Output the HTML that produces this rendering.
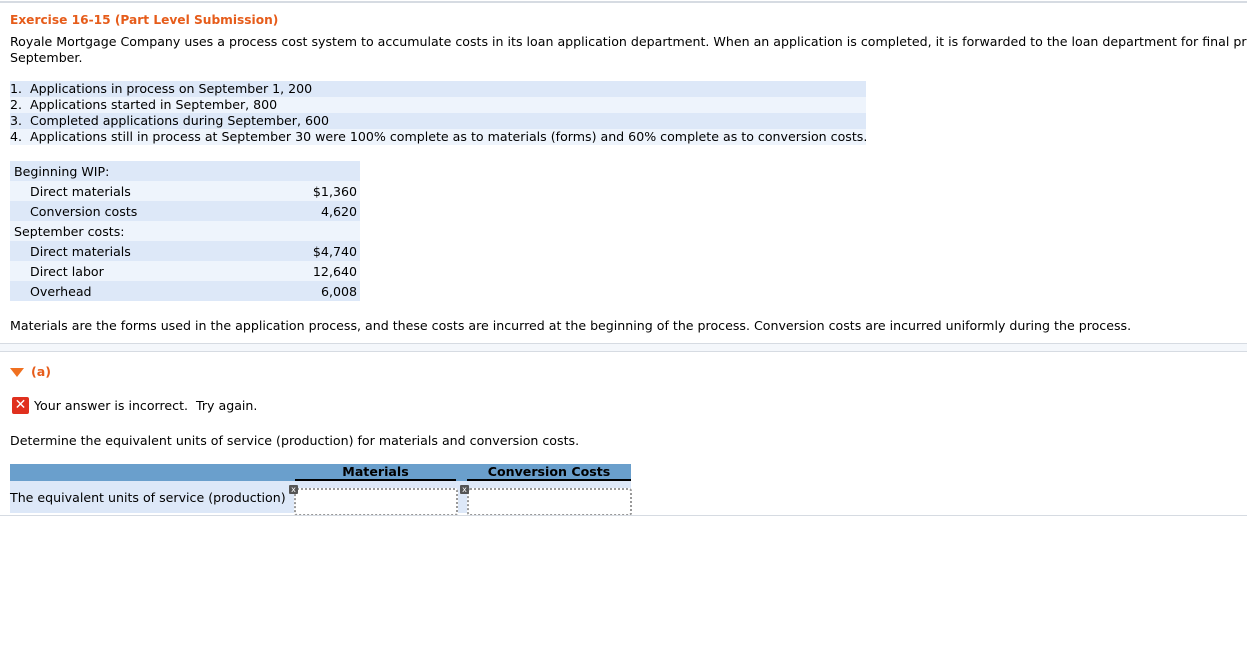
<!DOCTYPE html><html><head><style>
body{margin:0;width:1247px;height:648px;background:#fff;font-family:"DejaVu Sans","Liberation Sans",sans-serif;font-size:12.6px;color:#000;position:relative;overflow:hidden}
.a{position:absolute;white-space:nowrap}
.r{position:absolute;left:10px;line-height:16px;height:16px;white-space:nowrap}
.c{position:absolute;left:10px;width:350px;height:20px;line-height:21px;white-space:nowrap}
.d{background:#dde8f8}.l{background:#eef4fc}
.c span{position:absolute;right:3px}
</style></head><body>
<div class="a" style="left:0;top:1px;width:1247px;height:2px;background:#d6dbe2"></div>
<div class="a" style="left:10px;top:13px;color:#e65c1a;font-weight:bold;font-size:12.2px">Exercise 16-15 (Part Level Submission)</div>
<div class="a" style="left:10px;top:34px;line-height:16px;width:1237px;overflow:hidden">Royale Mortgage Company uses a process cost system to accumulate costs in its loan application department. When an application is completed, it is forwarded to the loan department for final processing.<br>September.</div>
<div class="r d" style="top:81px;width:856px">1.&nbsp; Applications in process on September 1, 200</div>
<div class="r l" style="top:97px;width:856px">2.&nbsp; Applications started in September, 800</div>
<div class="r d" style="top:113px;width:856px">3.&nbsp; Completed applications during September, 600</div>
<div class="r l" style="top:129px;width:856px">4.&nbsp; Applications still in process at September 30 were 100% complete as to materials (forms) and 60% complete as to conversion costs.</div>
<div class="c d" style="top:161px">&nbsp;Beginning WIP:</div>
<div class="c l" style="top:181px">&nbsp;&nbsp;&nbsp;&nbsp;&nbsp;Direct materials<span>$1,360</span></div>
<div class="c d" style="top:201px">&nbsp;&nbsp;&nbsp;&nbsp;&nbsp;Conversion costs<span>4,620</span></div>
<div class="c l" style="top:221px">&nbsp;September costs:</div>
<div class="c d" style="top:241px">&nbsp;&nbsp;&nbsp;&nbsp;&nbsp;Direct materials<span>$4,740</span></div>
<div class="c l" style="top:261px">&nbsp;&nbsp;&nbsp;&nbsp;&nbsp;Direct labor<span>12,640</span></div>
<div class="c d" style="top:281px">&nbsp;&nbsp;&nbsp;&nbsp;&nbsp;Overhead<span>6,008</span></div>
<div class="a" style="left:10px;top:318px">Materials are the forms used in the application process, and these costs are incurred at the beginning of the process. Conversion costs are incurred uniformly during the process.</div>
<div class="a" style="left:0;top:343px;width:1247px;height:7px;background:#f4f7fb;border-top:1px solid #d6dbe2;border-bottom:1px solid #d6dbe2"></div>
<svg class="a" style="left:10px;top:368px" width="14" height="9"><polygon points="0,0 14,0 7,9" fill="#f07020"/></svg>
<div class="a" style="left:31px;top:364px;color:#e65c1a;font-weight:bold">(a)</div>
<div class="a" style="left:12px;top:397px;width:17px;height:17px;background:#e0301e;border-radius:2px;color:#fff;font-weight:bold;font-size:14px;line-height:17px;text-align:center">✕</div>
<div class="a" style="left:34px;top:398px">Your answer is incorrect.&nbsp; Try again.</div>
<div class="a" style="left:10px;top:433px">Determine the equivalent units of service (production) for materials and conversion costs.</div>
<div class="a" style="left:10px;top:464px;width:621px;height:17px;background:#6a9fcc"></div>
<div class="a" style="left:10px;top:481px;width:621px;height:32px;background:#dde8f8"></div>
<div class="a" style="top:464px;height:15px;border-bottom:2px solid #000;text-align:center;font-weight:bold;line-height:16px;left:295px;width:161px">Materials</div>
<div class="a" style="left:467px;top:464px;width:164px;height:15px;border-bottom:2px solid #000;text-align:center;font-weight:bold;line-height:16px">Conversion Costs</div>
<div class="a" style="left:10px;top:490px">The equivalent units of service (production)</div>
<div class="a" style="left:294px;top:488px;width:160px;height:24px;border:2px dotted #999;border-radius:3px;background:#fff"></div>
<div class="a" style="left:467px;top:488px;width:161px;height:24px;border:2px dotted #999;border-radius:3px;background:#fff"></div>
<div class="a" style="left:289px;top:485px;width:9px;height:9px;background:#555;color:#fff;font-size:8px;line-height:9px;text-align:center;border-radius:1px">x</div>
<div class="a" style="left:460px;top:485px;width:9px;height:9px;background:#555;color:#fff;font-size:8px;line-height:9px;text-align:center;border-radius:1px">x</div>
<div class="a" style="left:0;top:515px;width:1247px;height:1px;background:#d6dbe2"></div>
</body></html>
